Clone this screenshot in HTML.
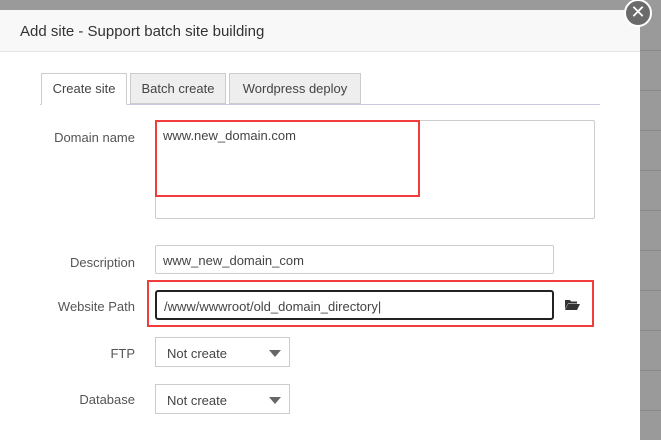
<!DOCTYPE html>
<html><head><style>
*{box-sizing:border-box;margin:0;padding:0}
body{width:661px;height:426px;overflow:hidden;background:#9a9a9a;font-family:"Liberation Sans",sans-serif;position:relative;font-size:13px;color:#555}
.line{position:absolute;left:640px;width:21px;height:1px;background:#8a8a8a}
.modal{position:absolute;left:0;top:10px;width:640px;height:430px;background:#fff}
.hdr{height:42px;background:#f8f8f8;border-bottom:1px solid #e5e5e5;font-size:15px;color:#333;padding:13px 0 0 20px}
.close{position:absolute;left:624px;top:-1px;width:28px;height:28px;border-radius:50%;background:#6b6b6b;border:2px solid #fff;color:#fff;text-align:center;font-size:18px;line-height:23px}
.tabs{position:absolute;left:40px;top:63px;width:560px;height:32px;border-bottom:1px solid #ccc7dd}
.tab{position:absolute;top:0;height:31px;border:1px solid #ccc;background:#eee;color:#444;font-size:13px;text-align:center;line-height:30px}
.tab.a{background:#fff;border-bottom-color:#fff;height:32px}
.lbl{position:absolute;right:526px;font-size:13px;color:#555}
.in{position:absolute;left:155px;border:1px solid #ccc;background:#fff;color:#444;font-size:13px;padding-left:7px;border-radius:2px}
.red{position:absolute;border:2px solid #f23b3b}
.sel{position:absolute;left:155px;width:135px;height:30px;border:1px solid #ccc;padding:8px 0 0 11px;color:#444}
.sel:after{content:"";position:absolute;right:8px;top:12px;border-left:6px solid transparent;border-right:6px solid transparent;border-top:7px solid #666}
</style></head><body>
<div class="line" style="top:50px"></div><div class="line" style="top:90px"></div><div class="line" style="top:130px"></div><div class="line" style="top:170px"></div><div class="line" style="top:210px"></div><div class="line" style="top:250px"></div><div class="line" style="top:290px"></div><div class="line" style="top:330px"></div><div class="line" style="top:370px"></div><div class="line" style="top:410px"></div>
<div class="modal">
<div class="hdr">Add site - Support batch site building</div>
<div class="tabs">
<div class="tab a" style="left:1px;width:86px">Create site</div>
<div class="tab" style="left:90px;width:96px">Batch create</div>
<div class="tab" style="left:189px;width:132px">Wordpress deploy</div>
</div>
</div>
<div class="close">✕</div>
<div class="lbl" style="top:130px">Domain name</div>
<div class="in" style="top:120px;width:440px;height:99px;padding-top:7px">www.new_domain.com</div>
<div class="red" style="left:155px;top:120px;width:265px;height:77px"></div>
<div class="lbl" style="top:255px">Description</div>
<div class="in" style="top:245px;width:399px;height:29px;padding-top:7px">www_new_domain_com</div>
<div class="lbl" style="top:299px">Website Path</div>
<div class="in" style="top:290px;width:399px;height:30px;padding-top:7px;border:2px solid #222;border-radius:3px">/www/wwwroot/old_domain_directory|</div>
<svg style="position:absolute;left:565px;top:298px" width="15" height="13" viewBox="0 0 15 13"><path d="M0 2h5l1 1.5h6v2H3L0 11z" fill="#333"/><path d="M3 6h12l-3 6H0z" fill="#333"/></svg>
<div class="red" style="left:147px;top:280px;width:447px;height:47px"></div>
<div class="lbl" style="top:346px">FTP</div>
<div class="sel" style="top:337px">Not create</div>
<div class="lbl" style="top:392px">Database</div>
<div class="sel" style="top:384px">Not create</div>
</body></html>
